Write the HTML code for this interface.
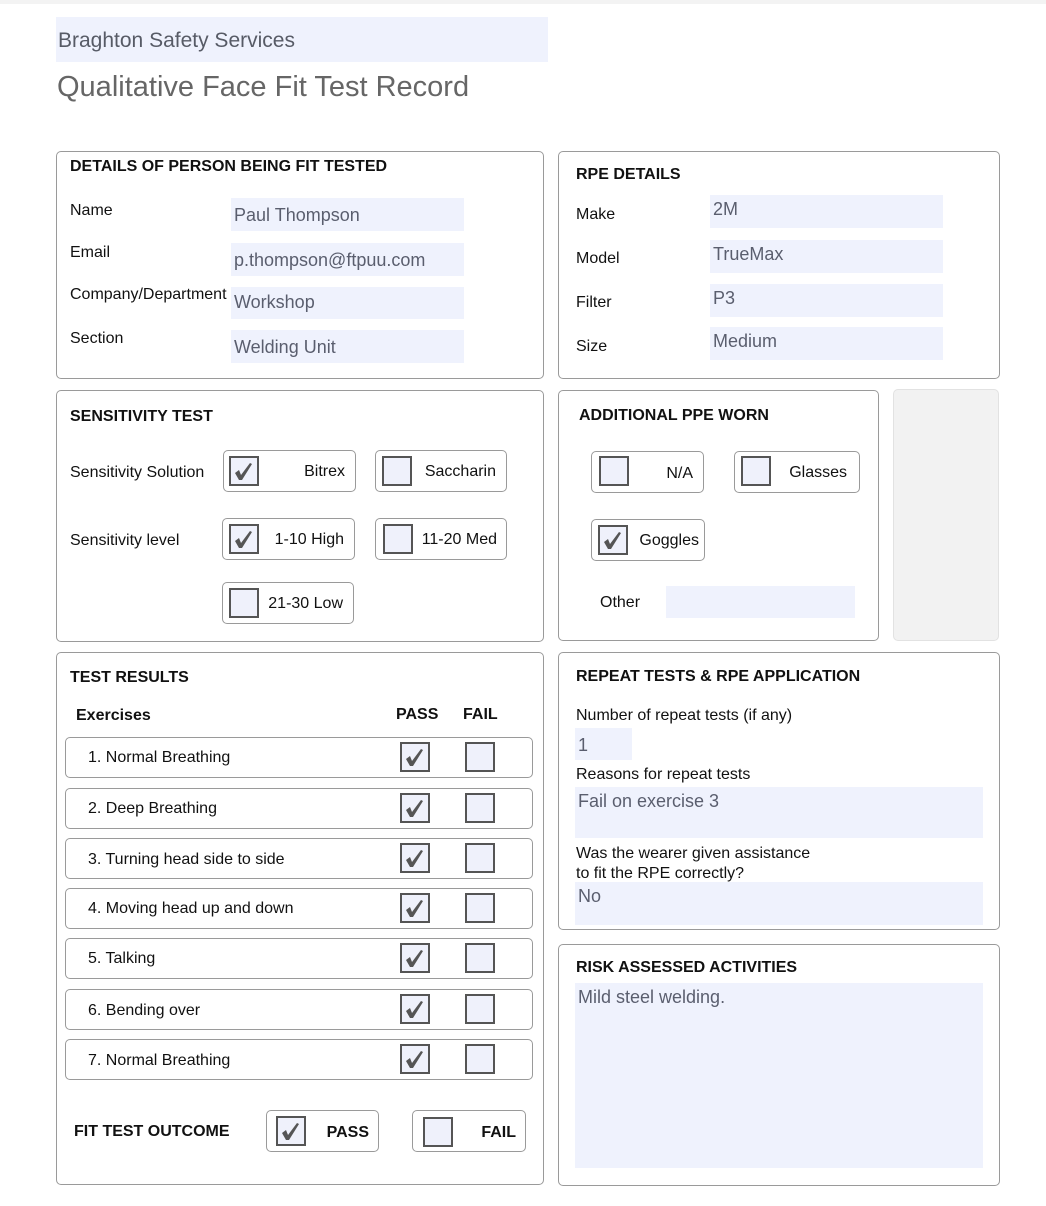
<!DOCTYPE html>
<html><head><meta charset="utf-8"><style>
*{box-sizing:border-box;margin:0;padding:0}
body{width:1046px;height:1206px;position:relative;background:#fff;font-family:"Liberation Sans",Arial,sans-serif;color:#111;overflow:hidden}
div{position:absolute}
.pn{border:1px solid #9a9a9a;border-radius:5px;background:#fff}
.h{font-weight:bold;font-size:16px;color:#111;white-space:nowrap}
.l{font-size:16px;color:#111;white-space:nowrap}
.f{background:#eff2fd;color:#5a5e6e;font-size:18px;padding:4px 3px;white-space:nowrap}
.ob{border:1px solid #9a9a9a;border-radius:5px;background:#fff;font-size:16px;white-space:nowrap}
.cb{width:30px;height:30px;border:2px solid #555;background:#eff1fb}
.cb svg{position:absolute;left:0;top:0}
.row{left:65px;width:468px;height:41px;border:1px solid #9a9a9a;border-radius:5px;font-size:16px}
</style></head><body>
<div style="left:0;top:0;width:1046px;height:4px;background:#f3f3f3"></div>
<div style="left:56px;top:17px;width:492px;height:45px;background:#eff2fd"></div>
<div style="left:58px;top:29px;font-size:21px;color:#575b66">Braghton Safety Services</div>
<div style="left:57px;top:71px;font-size:29px;color:#666">Qualitative Face Fit Test Record</div>

<!-- Panel 1 -->
<div class="pn" style="left:56px;top:151px;width:488px;height:228px"></div>
<div class="h" style="left:70px;top:158px">DETAILS OF PERSON BEING FIT TESTED</div>
<div class="l" style="left:70px;top:202px">Name</div>
<div class="l" style="left:70px;top:244px">Email</div>
<div class="l" style="left:70px;top:286px">Company/Department</div>
<div class="l" style="left:70px;top:330px">Section</div>
<div class="f" style="left:231px;top:198px;width:233px;height:33px;padding-top:7px">Paul Thompson</div>
<div class="f" style="left:231px;top:243px;width:233px;height:33px;padding-top:7px">p.thompson@ftpuu.com</div>
<div class="f" style="left:231px;top:287px;width:233px;height:32px;padding-top:5px">Workshop</div>
<div class="f" style="left:231px;top:330px;width:233px;height:33px;padding-top:7px">Welding Unit</div>

<!-- Panel 2 -->
<div class="pn" style="left:558px;top:151px;width:442px;height:228px"></div>
<div class="h" style="left:576px;top:166px">RPE DETAILS</div>
<div class="l" style="left:576px;top:206px">Make</div>
<div class="l" style="left:576px;top:250px">Model</div>
<div class="l" style="left:576px;top:294px">Filter</div>
<div class="l" style="left:576px;top:338px">Size</div>
<div class="f" style="left:710px;top:195px;width:233px;height:33px">2M</div>
<div class="f" style="left:710px;top:240px;width:233px;height:33px">TrueMax</div>
<div class="f" style="left:710px;top:284px;width:233px;height:33px">P3</div>
<div class="f" style="left:710px;top:327px;width:233px;height:33px">Medium</div>

<!-- Panel 3 -->
<div class="pn" style="left:56px;top:390px;width:488px;height:252px"></div>
<div class="h" style="left:70px;top:408px">SENSITIVITY TEST</div>
<div class="l" style="left:70px;top:464px">Sensitivity Solution</div>
<div class="l" style="left:70px;top:532px">Sensitivity level</div>
<div class="ob" style="left:223px;top:450px;width:133px;height:42px"><span style="position:absolute;right:10px;top:12px">Bitrex</span></div>
<div class="ob" style="left:375px;top:450px;width:132px;height:42px"><span style="position:absolute;right:10px;top:12px">Saccharin</span></div>
<div class="ob" style="left:222px;top:518px;width:133px;height:42px"><span style="position:absolute;right:10px;top:12px">1-10 High</span></div>
<div class="ob" style="left:375px;top:518px;width:132px;height:42px"><span style="position:absolute;right:9px;top:12px">11-20 Med</span></div>
<div class="ob" style="left:222px;top:582px;width:132px;height:42px"><span style="position:absolute;right:10px;top:12px">21-30 Low</span></div>
<div class="cb" style="left:229px;top:456px"><svg width="26" height="26" viewBox="0 0 26 26"><path d="M4 15 L8 12 L10 17 L19 5 L21 6 L11 22 L8 22 Z" fill="#555"/></svg></div>
<div class="cb" style="left:382px;top:456px"></div>
<div class="cb" style="left:229px;top:524px"><svg width="26" height="26" viewBox="0 0 26 26"><path d="M4 15 L8 12 L10 17 L19 5 L21 6 L11 22 L8 22 Z" fill="#555"/></svg></div>
<div class="cb" style="left:383px;top:524px"></div>
<div class="cb" style="left:229px;top:588px"></div>

<!-- Panel 4 -->
<div class="pn" style="left:558px;top:390px;width:321px;height:251px"></div>
<div class="h" style="left:579px;top:407px">ADDITIONAL PPE WORN</div>
<div class="ob" style="left:591px;top:451px;width:113px;height:42px"><span style="position:absolute;right:10px;top:13px">N/A</span></div>
<div class="ob" style="left:734px;top:451px;width:126px;height:42px"><span style="position:absolute;right:12px;top:12px">Glasses</span></div>
<div class="ob" style="left:591px;top:519px;width:114px;height:42px"><span style="position:absolute;right:5px;top:12px">Goggles</span></div>
<div class="cb" style="left:599px;top:456px"></div>
<div class="cb" style="left:741px;top:456px"></div>
<div class="cb" style="left:598px;top:525px"><svg width="26" height="26" viewBox="0 0 26 26"><path d="M4 15 L8 12 L10 17 L19 5 L21 6 L11 22 L8 22 Z" fill="#555"/></svg></div>
<div class="l" style="left:600px;top:594px">Other</div>
<div style="left:666px;top:586px;width:189px;height:32px;background:#eff2fd"></div>
<div style="left:893px;top:389px;width:106px;height:252px;background:#f2f2f2;border:1px solid #e2e2e2;border-radius:5px"></div>

<!-- Panel 5 -->
<div class="pn" style="left:56px;top:652px;width:488px;height:533px"></div>
<div class="h" style="left:70px;top:669px">TEST RESULTS</div>
<div class="h" style="left:76px;top:707px">Exercises</div>
<div class="h" style="left:396px;top:706px">PASS</div>
<div class="h" style="left:463px;top:706px">FAIL</div>

<div class="row" style="top:737px"><span style="position:absolute;left:22px;top:11px">1. Normal Breathing</span></div>
<div class="row" style="top:788px"><span style="position:absolute;left:22px;top:11px">2. Deep Breathing</span></div>
<div class="row" style="top:838px"><span style="position:absolute;left:22px;top:12px">3. Turning head side to side</span></div>
<div class="row" style="top:888px"><span style="position:absolute;left:22px;top:11px">4. Moving head up and down</span></div>
<div class="row" style="top:938px"><span style="position:absolute;left:22px;top:11px">5. Talking</span></div>
<div class="row" style="top:989px"><span style="position:absolute;left:22px;top:12px">6. Bending over</span></div>
<div class="row" style="top:1039px"><span style="position:absolute;left:22px;top:12px">7. Normal Breathing</span></div>

<div class="cb" style="left:400px;top:742px"><svg width="26" height="26" viewBox="0 0 26 26"><path d="M4 15 L8 12 L10 17 L19 5 L21 6 L11 22 L8 22 Z" fill="#555"/></svg></div>
<div class="cb" style="left:465px;top:742px"></div>
<div class="cb" style="left:400px;top:793px"><svg width="26" height="26" viewBox="0 0 26 26"><path d="M4 15 L8 12 L10 17 L19 5 L21 6 L11 22 L8 22 Z" fill="#555"/></svg></div>
<div class="cb" style="left:465px;top:793px"></div>
<div class="cb" style="left:400px;top:843px"><svg width="26" height="26" viewBox="0 0 26 26"><path d="M4 15 L8 12 L10 17 L19 5 L21 6 L11 22 L8 22 Z" fill="#555"/></svg></div>
<div class="cb" style="left:465px;top:843px"></div>
<div class="cb" style="left:400px;top:893px"><svg width="26" height="26" viewBox="0 0 26 26"><path d="M4 15 L8 12 L10 17 L19 5 L21 6 L11 22 L8 22 Z" fill="#555"/></svg></div>
<div class="cb" style="left:465px;top:893px"></div>
<div class="cb" style="left:400px;top:943px"><svg width="26" height="26" viewBox="0 0 26 26"><path d="M4 15 L8 12 L10 17 L19 5 L21 6 L11 22 L8 22 Z" fill="#555"/></svg></div>
<div class="cb" style="left:465px;top:943px"></div>
<div class="cb" style="left:400px;top:994px"><svg width="26" height="26" viewBox="0 0 26 26"><path d="M4 15 L8 12 L10 17 L19 5 L21 6 L11 22 L8 22 Z" fill="#555"/></svg></div>
<div class="cb" style="left:465px;top:994px"></div>
<div class="cb" style="left:400px;top:1044px"><svg width="26" height="26" viewBox="0 0 26 26"><path d="M4 15 L8 12 L10 17 L19 5 L21 6 L11 22 L8 22 Z" fill="#555"/></svg></div>
<div class="cb" style="left:465px;top:1044px"></div>

<div class="h" style="left:74px;top:1123px">FIT TEST OUTCOME</div>
<div class="ob" style="left:266px;top:1110px;width:113px;height:42px"><span style="position:absolute;right:9px;top:13px;font-weight:bold">PASS</span></div>
<div class="ob" style="left:412px;top:1110px;width:114px;height:42px"><span style="position:absolute;right:9px;top:13px;font-weight:bold">FAIL</span></div>
<div class="cb" style="left:276px;top:1116px"><svg width="26" height="26" viewBox="0 0 26 26"><path d="M4 15 L8 12 L10 17 L19 5 L21 6 L11 22 L8 22 Z" fill="#555"/></svg></div>
<div class="cb" style="left:423px;top:1117px"></div>

<!-- Panel 6 -->
<div class="pn" style="left:558px;top:652px;width:442px;height:278px"></div>
<div class="h" style="left:576px;top:668px">REPEAT TESTS &amp; RPE APPLICATION</div>
<div class="l" style="left:576px;top:707px">Number of repeat tests (if any)</div>
<div class="f" style="left:575px;top:728px;width:57px;height:32px;padding-top:7px">1</div>
<div class="l" style="left:576px;top:766px">Reasons for repeat tests</div>
<div class="f" style="left:575px;top:787px;width:408px;height:51px">Fail on exercise 3</div>
<div class="l" style="left:576px;top:844px;line-height:20px">Was the wearer given assistance<br>to fit the RPE correctly?</div>
<div class="f" style="left:575px;top:882px;width:408px;height:43px">No</div>

<!-- Panel 7 -->
<div class="pn" style="left:558px;top:944px;width:442px;height:242px"></div>
<div class="h" style="left:576px;top:959px">RISK ASSESSED ACTIVITIES</div>
<div class="f" style="left:575px;top:983px;width:408px;height:185px">Mild steel welding.</div>
</body></html>
